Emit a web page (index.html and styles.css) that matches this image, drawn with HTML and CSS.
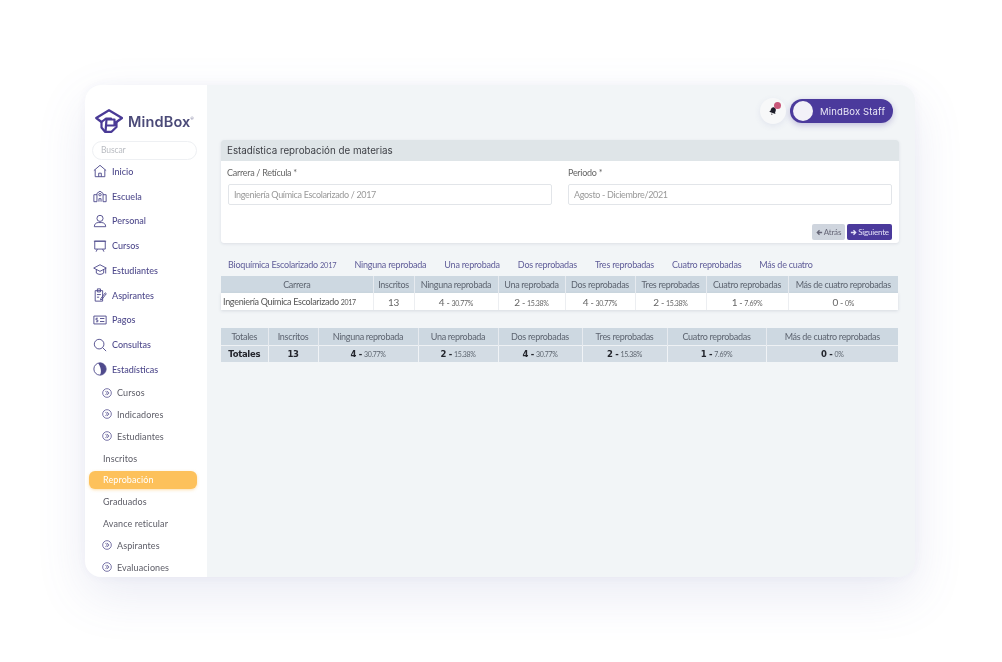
FILE: index.html
```html
<!DOCTYPE html>
<html lang="es">
<head>
<meta charset="utf-8">
<title>MindBox</title>
<link rel="stylesheet" href="styles.css">
</head>
<body>
<div class="window">
  <aside class="sidebar">
    <div class="logo">
      <svg class="logo-mark" viewBox="0 0 28 24" fill="none" stroke="#4a3a96" stroke-width="2.200" stroke-linejoin="round" stroke-linecap="round"><path d="M21.500 13 27 9 14 1.200 1.200 9 6.500 13V18.500L10 22.800"/><path d="M21.500 13V18L16.500 22.800H10.500L11.500 10.500H19.500V16.500H11.500"/><path d="M6.500 13 11 9.500H16"/></svg>
      <span class="logo-text">MindBox</span><span class="logo-tm">®</span>
    </div>
    <div class="search">Buscar</div>
    <nav class="nav">
      <a class="nav-item"><svg class="ico" viewBox="0 0 16 16"><path d="M1 7.500 8 1.500l7 6M2.500 6.500V14.500h11V6.500M6.500 14.500v-4h3v4"/></svg>Inicio</a>
      <a class="nav-item"><svg class="ico" viewBox="0 0 16 16"><path d="M4.500 14.500V5L8 2.500 11.500 5v9.500M4.500 6.500H1v8h3.500M11.500 6.500H15v8h-3.500M6.800 14.500V11h2.400v3.500"/><circle cx="8" cy="6.500" r="1.400"/></svg>Escuela</a>
      <a class="nav-item"><svg class="ico" viewBox="0 0 16 16"><circle cx="8" cy="5" r="3.500"/><path d="M1.500 14.500c0-3 2-4.700 4.500-4.700h4c2.500 0 4.500 1.700 4.500 4.700z"/></svg>Personal</a>
      <a class="nav-item"><svg class="ico" viewBox="0 0 16 16"><path d="M2 2.500h12v9H2zM1 2.500h14M5 11.500l-1.500 3M11 11.500l1.500 3"/></svg>Cursos</a>
      <a class="nav-item"><svg class="ico" viewBox="0 0 16 16"><path d="M8 2 .800 5.800 8 9.500l7.200-3.700zM3.800 7.500v4c2.500 2 5.900 2 8.400 0v-4M14.500 6.500v5.500"/></svg>Estudiantes</a>
      <a class="nav-item"><svg class="ico" viewBox="0 0 16 16"><path d="M2.500 3h8.500v12H2.500zM5 1h3.500v3.500H5zM4.500 7.500h4.500M4.500 10.500h2.500M9 12l5-6.500 1.200 1-5 6.500-1.700.500z"/></svg>Aspirantes</a>
      <a class="nav-item"><svg class="ico" viewBox="0 0 16 16"><path d="M1 3.500h14v9H1zM8 6.300h5M8 9.700h5M5.500 6H3.500v2h2v2h-2"/></svg>Pagos</a>
      <a class="nav-item"><svg class="ico" viewBox="0 0 16 16"><circle cx="7" cy="7" r="5.500"/><path d="m11 11 4 4"/></svg>Consultas</a>
      <a class="nav-item"><svg class="ico" viewBox="0 0 16 16"><circle cx="8" cy="8" r="7"/><path class="ico-fill" d="M6 1.300A7 7 0 0 1 15 8 7 7 0 0 1 8 15C10 11 9 6 6 1.300z"/></svg>Estadísticas</a>
    </nav>
    <div class="subnav">
      <a class="sub-item"><svg class="chev" viewBox="0 0 12 12"><circle cx="6" cy="6" r="5.200"/><path d="m4 3.500 2.500 2.500L4 8.500M6 3.500 8.500 6 6 8.500"/></svg>Cursos</a>
      <a class="sub-item"><svg class="chev" viewBox="0 0 12 12"><circle cx="6" cy="6" r="5.200"/><path d="m4 3.500 2.500 2.500L4 8.500M6 3.500 8.500 6 6 8.500"/></svg>Indicadores</a>
      <a class="sub-item"><svg class="chev" viewBox="0 0 12 12"><circle cx="6" cy="6" r="5.200"/><path d="m4 3.500 2.500 2.500L4 8.500M6 3.500 8.500 6 6 8.500"/></svg>Estudiantes</a>
      <a class="sub-item plain">Inscritos</a>
      <a class="sub-item plain active">Reprobación</a>
      <a class="sub-item plain">Graduados</a>
      <a class="sub-item plain">Avance reticular</a>
      <a class="sub-item"><svg class="chev" viewBox="0 0 12 12"><circle cx="6" cy="6" r="5.200"/><path d="m4 3.500 2.500 2.500L4 8.500M6 3.500 8.500 6 6 8.500"/></svg>Aspirantes</a>
      <a class="sub-item"><svg class="chev" viewBox="0 0 12 12"><circle cx="6" cy="6" r="5.200"/><path d="m4 3.500 2.500 2.500L4 8.500M6 3.500 8.500 6 6 8.500"/></svg>Evaluaciones</a>
    </div>
  </aside>
  <main class="main">
    <header class="topbar">
      <div class="bell">
        <svg class="bell-icon" viewBox="0 0 12 12"><path d="M6 1.500c2 0 3 1.500 3 3.500v2l1 1.500H2L3 7V5c0-2 1-3.500 3-3.500zM5 9.500h2L6 11z"/></svg>
        <span class="badge"></span>
      </div>
      <div class="user">
        <span class="avatar"></span>
        <span class="user-name">MindBox Staff</span>
      </div>
    </header>
    <section class="card">
      <h1 class="card-title">Estadística reprobación de materias</h1>
      <div class="form-row">
        <div class="field">
          <label class="field-label">Carrera / Retícula *</label>
          <div class="input">Ingeniería Química Escolarizado / 2017</div>
        </div>
        <div class="field">
          <label class="field-label">Periodo *</label>
          <div class="input">Agosto - Diciembre/2021</div>
        </div>
      </div>
      <div class="actions">
        <button class="btn btn-back"><svg class="btn-arrow" viewBox="0 0 8 8"><path d="M7 4H2M4 1.500 1.500 4 4 6.500"/></svg>Atrás</button>
        <button class="btn btn-next"><svg class="btn-arrow" viewBox="0 0 8 8"><path d="M1 4h5M4 1.500 6.500 4 4 6.500"/></svg>Siguiente</button>
      </div>
    </section>
    <div class="tabs">
      <span>Bioquímica Escolarizado <small>2017</small></span>
      <span>Ninguna reprobada</span>
      <span>Una reprobada</span>
      <span>Dos reprobadas</span>
      <span>Tres reprobadas</span>
      <span>Cuatro reprobadas</span>
      <span>Más de cuatro</span>
    </div>
    <table class="grid grid-detail">
      <colgroup><col class="a1"><col class="a2"><col class="a3"><col class="a4"><col class="a5"><col class="a6"><col class="a7"><col class="a8"></colgroup>
      <thead><tr><th>Carrera</th><th>Inscritos</th><th>Ninguna reprobada</th><th>Una reprobada</th><th>Dos reprobadas</th><th>Tres reprobadas</th><th>Cuatro reprobadas</th><th>Más de cuatro reprobadas</th></tr></thead>
      <tbody><tr><td class="left">Ingeniería Química Escolarizado <small>2017</small></td><td class="big">13</td><td><b>4</b> - <small>30.77%</small></td><td><b>2</b> - <small>15.38%</small></td><td><b>4</b> - <small>30.77%</small></td><td><b>2</b> - <small>15.38%</small></td><td><b>1</b> - <small>7.69%</small></td><td><b>0</b> - <small>0%</small></td></tr></tbody>
    </table>
    <table class="grid grid-total">
      <colgroup><col class="b1"><col class="b2"><col class="b3"><col class="b4"><col class="b5"><col class="b6"><col class="b7"><col class="b8"></colgroup>
      <thead><tr><th>Totales</th><th>Inscritos</th><th>Ninguna reprobada</th><th>Una reprobada</th><th>Dos reprobadas</th><th>Tres reprobadas</th><th>Cuatro reprobadas</th><th>Más de cuatro reprobadas</th></tr></thead>
      <tbody><tr><td><b>Totales</b></td><td><b>13</b></td><td><b>4 -</b> <small>30.77%</small></td><td><b>2 -</b> <small>15.38%</small></td><td><b>4 -</b> <small>30.77%</small></td><td><b>2 -</b> <small>15.38%</small></td><td><b>1 -</b> <small>7.69%</small></td><td><b>0 -</b> <small>0%</small></td></tr></tbody>
    </table>
  </main>
</div>
</body>
</html>
```
FILE: styles.css
```css
* { box-sizing: border-box; }
html, body { margin: 0; height: 100%; overflow: hidden; background: #fff; }
body { font-family: "Lato", "Liberation Sans", sans-serif; color: #555; }
.window {
  display: flex; width: 830px; height: 492px; margin: 85px 0 0 85px;
  border-radius: 16px; overflow: hidden; background: #f2f5f7;
  box-shadow: 0 18px 50px rgba(90, 100, 170, .13), 0 0 14px rgba(90, 100, 170, .05);
  filter: blur(.35px);
}
.sidebar { width: 122px; flex: none; background: #fff; padding: 24px 0 0 7px; overflow: hidden; }
.logo { display: flex; align-items: center; height: 24px; margin-left: 3px; }
.logo-mark { width: 28px; height: 24px; flex: none; }
.logo-text { font-family: "Inter", sans-serif; font-weight: 600; font-size: 14.500px; color: #4b4a78; margin-left: 5px; letter-spacing: .15px; }
.logo-tm { font-size: 4px; color: #4b4a78; align-self: flex-start; margin-top: 7px; }
.search {
  width: 105px; height: 19px; margin-top: 8px; border: 1px solid #eef0f3; border-radius: 10px;
  font-size: 8.500px; line-height: 17px; padding-left: 8px; color: #b9bcc2; letter-spacing: -.1px;
}
.nav { display: flex; flex-direction: column; margin-top: -1px; }
.nav-item { display: flex; align-items: center; height: 24.750px; font-size: 9px; font-weight: 500; color: #4f4a8c; padding-left: 1px; }
.ico { width: 14px; height: 14px; margin-right: 5px; flex: none; fill: none; stroke: #4f4a8c; stroke-width: 1.050; stroke-linejoin: round; }
.ico-fill { fill: #4f4a8c; stroke: none; }
.subnav { display: flex; flex-direction: column; margin-top: 0; }
.sub-item { display: flex; align-items: center; height: 21.800px; font-size: 9px; color: #5c5c66; padding-left: 10px; letter-spacing: .1px; }
.sub-item.plain { padding-left: 7px; margin-left: 4px; }
.sub-item.active { background: #fdc15b; color: #fff; border-radius: 6px; margin-left: -3px; padding-left: 14px; width: 108px; height: 18px; margin-top: 2px; margin-bottom: 2px; box-shadow: 0 1px 3px rgba(253, 193, 91, .5); }
.chev { width: 10px; height: 10px; margin-right: 5px; fill: none; stroke: #4f4a8c; stroke-width: .9; }
.main { flex: 1; padding: 14px 16px 0 14px; min-width: 0; }
.topbar { display: flex; align-items: center; justify-content: flex-end; height: 24px; padding-right: 6px; gap: 4px; }
.bell { position: relative; width: 26px; height: 26px; border-radius: 50%; background: #f7f8f9; box-shadow: 0 2px 6px rgba(90, 100, 170, .1); display: flex; align-items: center; justify-content: center; }
.bell-icon { width: 10px; height: 10px; fill: #1c1c28; transform: rotate(20deg); }
.badge { position: absolute; top: 4px; right: 5px; width: 7px; height: 7px; border-radius: 50%; background: #c9587a; }
.user { display: flex; align-items: center; width: 103px; height: 24px; border-radius: 12px; background: #4b3a9c; box-shadow: 0 2px 6px rgba(75, 58, 156, .3); padding-left: 3px; }
.avatar { width: 20px; height: 20px; border-radius: 50%; background: #f2f1f8; flex: none; }
.user-name { font-family: "Inter", sans-serif; font-size: 9.500px; letter-spacing: .15px; color: #e9e7f6; margin-left: 7px; white-space: nowrap; }
.card { width: 678px; height: 103px; margin-top: 17px; background: #fff; border-radius: 3px; box-shadow: 0 1px 3px rgba(90, 100, 130, .14); overflow: hidden; }
.card-title { margin: 0; height: 21px; background: #dfe5e8; font-family: "Inter", sans-serif; font-weight: 400; font-size: 9.800px; line-height: 21px; padding-left: 6px; color: #3e4046; }
.form-row { display: flex; gap: 16px; padding: 6px 7px 0 7px; }
.field { flex: 0 0 324px; }
.field-label { display: block; margin-left: -1px; font-size: 9px; letter-spacing: -.28px; color: #666; height: 12px; line-height: 12px; }
.field + .field .field-label { margin-left: 0; }
.input { height: 21px; margin-top: 5px; border: 1px solid #e2e5e9; border-radius: 2px; font-size: 9px; letter-spacing: -.33px; line-height: 19px; padding-left: 5px; color: #999; }
.actions { display: flex; justify-content: flex-end; gap: 2px; padding: 19px 7px 0 0; }
.btn { display: flex; align-items: center; justify-content: center; gap: 1px; height: 16px; border: 0; border-radius: 2px; font: 8px "Lato", sans-serif; letter-spacing: -.2px; padding: 0; white-space: nowrap; }
.btn-arrow { width: 7px; height: 7px; fill: none; stroke: currentColor; stroke-width: 1.500; flex: none; }
.btn-back { width: 33px; background: #cfd5de; color: #667; }
.btn-next { width: 45px; background: #4b3a9c; color: #e4e1f6; }
.tabs { display: flex; gap: 18px; margin: 16px 0 0 7px; height: 17px; font-size: 9px; letter-spacing: -.22px; line-height: 12px; color: #5f5c98; white-space: nowrap; }
.tabs small { font-size: 7.500px; }
.grid { width: 677px; border-collapse: collapse; table-layout: fixed; font-size: 9px; letter-spacing: -.3px; }
.grid th { font-weight: 400; color: #5d6470; background: #cdd8e1; height: 17px; padding: 0; border-right: 1px solid #e6eaef; text-align: center; white-space: nowrap; }
.grid td { height: 17px; padding: 0; text-align: center; white-space: nowrap; border-right: 1px solid #eceef1; }
.grid th:last-child, .grid td:last-child { border-right: 0; }
.grid small { font-size: 7px; }
.grid-detail tbody tr { background: #fff; box-shadow: 0 1px 3px rgba(90, 100, 130, .18); }
.grid-detail td { color: #666; }
.grid-detail td b { font-weight: 400; font-size: 10px; }
.grid-detail .left { text-align: left; padding-left: 2px; color: #555; }
.grid-detail .big { font-size: 10px; }
.grid-total { margin-top: 18px; }
.grid-total td { background: #d3dce4; color: #5e6670; border-right: 1px solid #f0f3f6; border-top: 1px solid #eef1f4; }
.grid-total td b { color: #23252c; font-weight: 700; font-family: "DejaVu Sans", sans-serif; font-size: 8.500px; }
.a1 { width: 152px; } .a2 { width: 41px; } .a3 { width: 84px; } .a4 { width: 67px; } .a5 { width: 70px; } .a6 { width: 71px; } .a7 { width: 82px; } .a8 { width: 110px; }
.b1 { width: 47px; } .b2 { width: 50px; } .b3 { width: 100px; } .b4 { width: 80px; } .b5 { width: 84px; } .b6 { width: 85px; } .b7 { width: 99px; } .b8 { width: 132px; }
```
